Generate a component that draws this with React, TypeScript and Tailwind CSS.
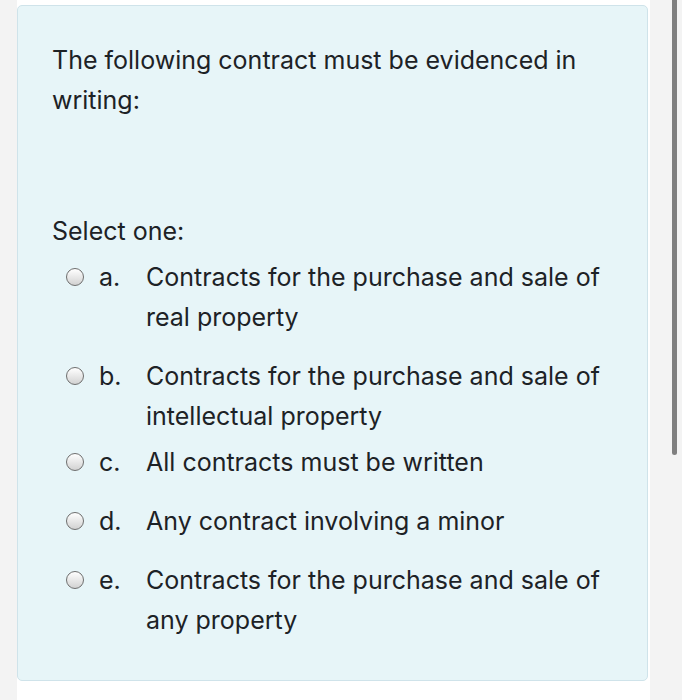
const options = [
  { letter: "a.", lines: ["Contracts for the purchase and sale of", "real property"], gap: "mb-[19px]" },
  { letter: "b.", lines: ["Contracts for the purchase and sale of", "intellectual property"], gap: "mb-[6px]" },
  { letter: "c.", lines: ["All contracts must be written"], gap: "mb-[19px]" },
  { letter: "d.", lines: ["Any contract involving a minor"], gap: "mb-[19px]" },
  { letter: "e.", lines: ["Contracts for the purchase and sale of", "any property"], gap: "" },
];

function Radio() {
  return (
    <span className="mt-[11px] block h-[18px] w-[18px] shrink-0 rounded-full border-[1.5px] border-[#6e6e6e] bg-gradient-to-b from-white to-[#d2d2d2]" />
  );
}

export default function App() {
  return (
    <div
      className="relative flex h-[700px] w-[682px] bg-[#f3f3f3] text-[#1d2226]"
      style={{ fontFamily: 'Inter, "Liberation Sans", sans-serif' }}
    >
      <div className="ml-[17px] w-[633px] bg-white pt-[5px]">
        <div className="w-[631px] rounded-[5px] border border-[#cfe3ea] bg-[#e7f5f8] pb-[40px] pl-[34px] pr-[20px] pt-[34px] text-[25px] leading-[40px]">
          <p className="whitespace-nowrap">
            The following contract must be evidenced in
            <br />
            writing:
          </p>
          <p className="mt-[91px]">Select one:</p>
          <div className="mt-[6px] pl-[14px]">
            {options.map((o) => (
              <div key={o.letter} className={`flex ${o.gap}`}>
                <Radio />
                <span className="ml-[15px] w-[47px] shrink-0">{o.letter}</span>
                <span className="whitespace-nowrap">
                  {o.lines.map((l, i) => (
                    <span key={i} className="block">
                      {l}
                    </span>
                  ))}
                </span>
              </div>
            ))}
          </div>
        </div>
      </div>
      <div className="absolute left-[672px] top-0 h-[455px] w-[5px] rounded-b-full bg-[#7f7f7f]" />
    </div>
  );
}
